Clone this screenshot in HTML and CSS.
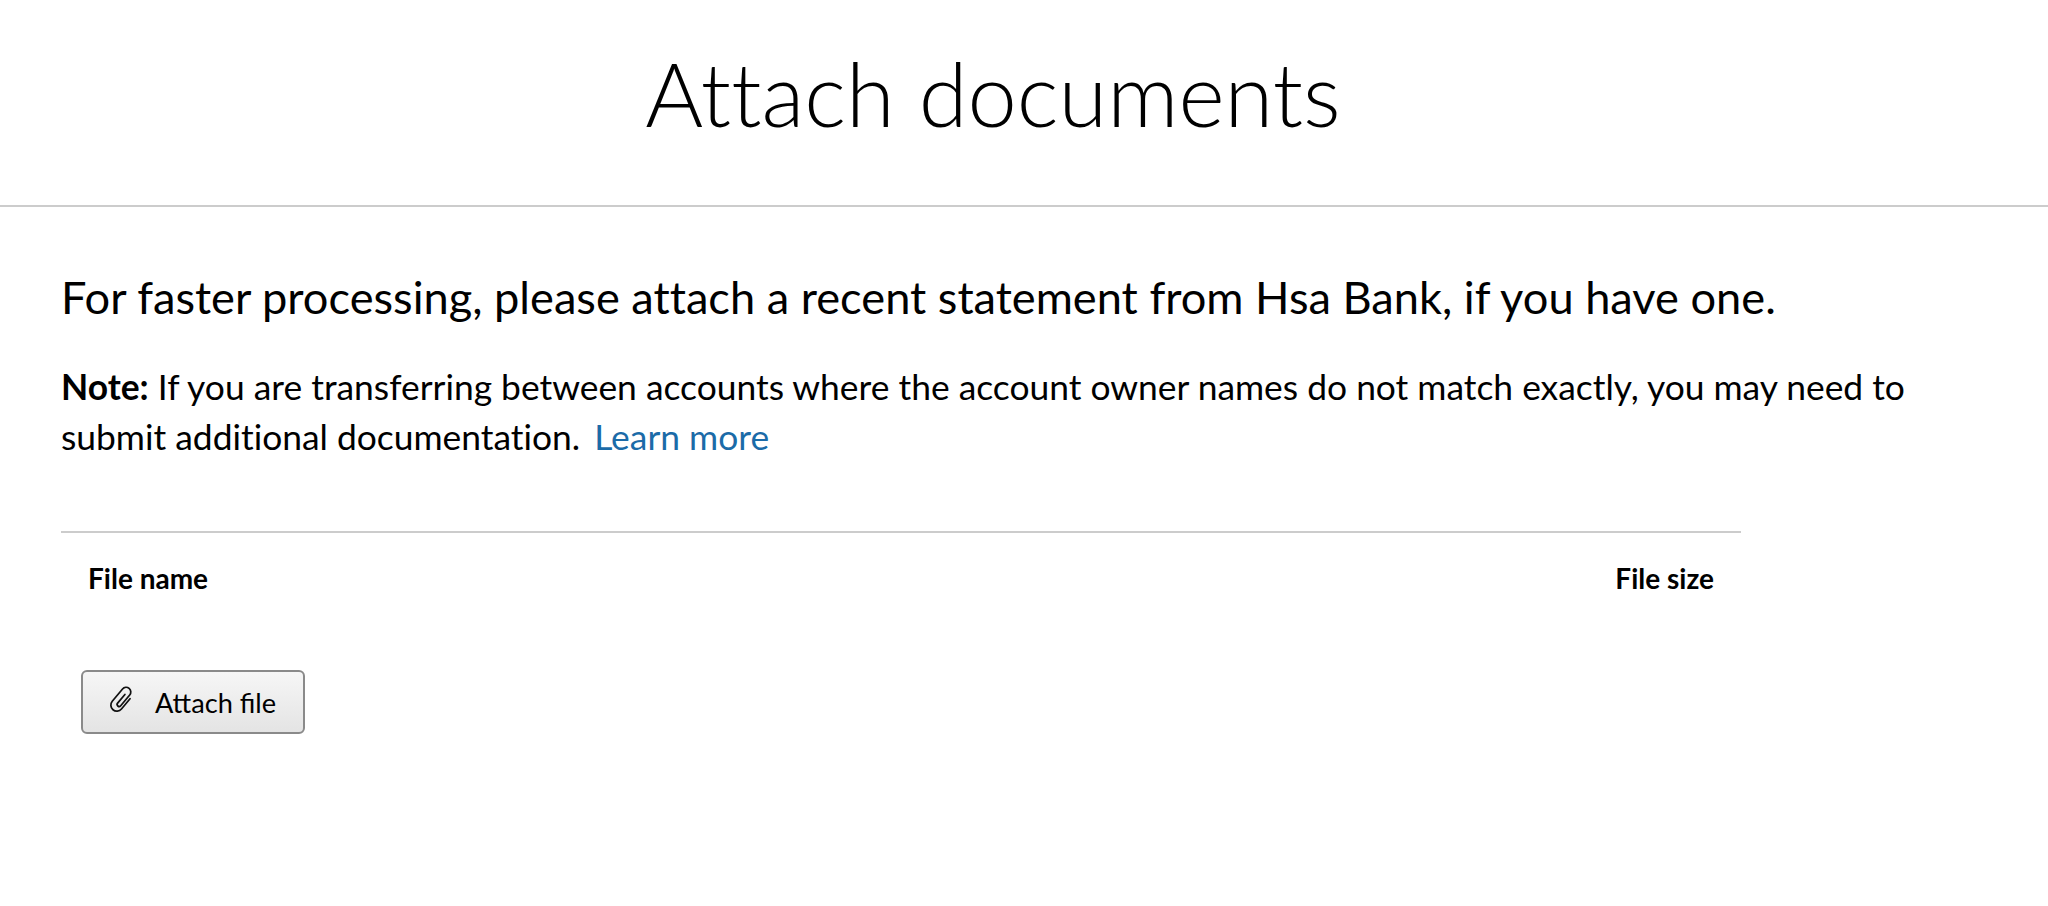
FILE: index.html
```html
<!DOCTYPE html>
<html>
  <head>
    <title>Attach documents</title>
    <link rel="stylesheet" href="styles.css">
  </head>
  <body>
    <header class="page-header">
      <h1>Attach documents</h1>
    </header>
    <main class="content">
      <p class="lead">For faster processing, please attach a recent statement from Hsa Bank, if you have one.</p>
      <p class="note"><strong>Note:</strong> If you are transferring between accounts where the account owner names do not match exactly, you may need to submit additional documentation. <a href="#">Learn more</a></p>
      <div class="file-table">
        <div class="file-head">
          <span>File name</span>
          <span>File size</span>
        </div>
        <button class="attach-btn" type="button">
          <svg class="clip" width="32" height="32" viewBox="0 0 24 24" fill="none" stroke="#111" stroke-width="1.3" stroke-linecap="round" stroke-linejoin="round">
            <path transform="rotate(40 12 12)" d="M16.500 8V18a4.500 4.500 0 0 1-9 0V6a3.500 3.500 0 0 1 7 0V16.500a1.500 1.500 0 0 1-3 0V8"/>
          </svg>
          <span>Attach file</span>
        </button>
      </div>
    </main>
  </body>
</html>
```

FILE: styles.css
```css
body {
  margin: 0;
  font-family: Lato, Arial, sans-serif;
  font-variant-ligatures: none;
  color: #000;
  background: #fff;
}
.page-header {
  height: 205px;
  border-bottom: 2px solid #ccc;
  padding-right: 62px;
  text-align: center;
}
h1 {
  margin: 0;
  padding-top: 38px;
  font-size: 88.500px;
  font-weight: 300;
  line-height: 110px;
}
.content {
  padding: 65px 0 0 61px;
}
.lead {
  margin: 0;
  font-size: 45.200px;
  line-height: 50px;
}
.note {
  margin: 40px 0 0;
  width: 1900px;
  font-size: 35.400px;
  line-height: 50px;
}
.note strong {
  font-weight: 700;
}
.note a {
  color: #1b6ba8;
  text-decoration: none;
  margin-left: 5px;
}
.file-table {
  width: 1680px;
  margin-top: 69px;
  border-top: 2px solid #ccc;
}
.file-head {
  display: flex;
  justify-content: space-between;
  padding: 29px 27px 0;
  font-size: 28px;
  font-weight: 700;
  line-height: 32px;
}
.attach-btn {
  display: flex;
  align-items: center;
  gap: 17px;
  width: 224px;
  height: 64px;
  margin: 76px 0 0 20px;
  padding: 0 0 0 23px;
  border: 2px solid #8a8a8a;
  border-radius: 6px;
  background: linear-gradient(#f6f6f6, #e4e4e4);
  font-family: inherit;
  font-size: 27.200px;
  color: #000;
}
.clip {
  margin-bottom: 6px;
}
```
